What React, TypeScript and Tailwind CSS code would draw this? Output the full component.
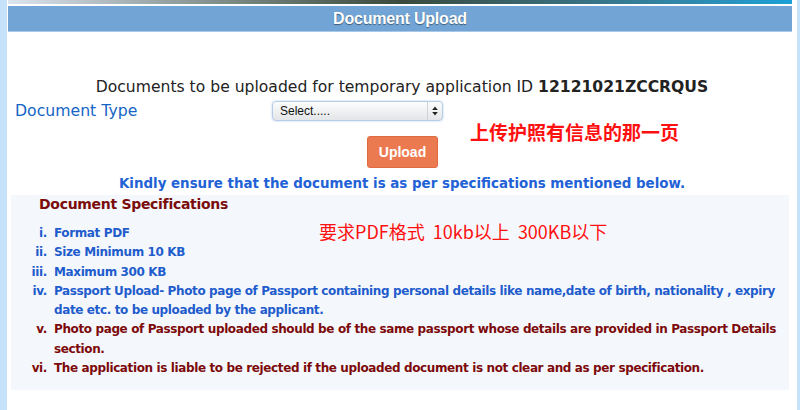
import React from 'react';

const specs: { text: React.ReactNode; tone: 'blue' | 'red' }[] = [
  { text: 'Format PDF', tone: 'blue' },
  { text: 'Size Minimum 10 KB', tone: 'blue' },
  { text: 'Maximum 300 KB', tone: 'blue' },
  {
    text: (
      <>
        Passport Upload- Photo page of Passport containing personal details like name,date of birth, nationality , expiry
        <br />
        date etc. to be uploaded by the applicant.
      </>
    ),
    tone: 'blue',
  },
  {
    text: (
      <>
        Photo page of Passport uploaded should be of the same passport whose details are provided in Passport Details
        <br />
        section.
      </>
    ),
    tone: 'red',
  },
  { text: 'The application is liable to be rejected if the uploaded document is not clear and as per specification.', tone: 'red' },
];

const numerals = ['i.', 'ii.', 'iii.', 'iv.', 'v.', 'vi.'];

const verdana = { fontFamily: '"DejaVu Sans", Verdana, sans-serif' };

export default function App() {
  return (
    <div className="flex h-[410px] w-[800px] overflow-hidden bg-[#c6e2fb]">
      <div className="relative ml-[7px] h-full w-[790px] bg-white">
        {/* top banner strip */}
        <div className="ml-[1px] mr-[5px] h-[4px] bg-gradient-to-r from-[#dde5f0] via-[#3a4a3c] to-[#1aa0d8]"></div>

        {/* header bar */}
        <div className="ml-[1px] mr-[5px] mt-[2px] flex h-[26px] items-center justify-center border-b border-[#a9c8e8] bg-[#72a5d6]">
          <span
            className="text-[16px] font-bold text-white [text-shadow:0_1px_1px_rgba(0,0,0,0.45)]"
            style={{ fontFamily: '"Liberation Sans Narrow", "Liberation Sans", Arial, sans-serif', letterSpacing: '-0.2px' }}
          >
            Document Upload
          </span>
        </div>

        <div style={verdana}>
          <p className="mt-[45px] text-center text-[15.6px] leading-[20px] text-[#222]">
            Documents to be uploaded for temporary application ID <b>12121021ZCCRQUS</b>
          </p>

          <div className="mt-[4px] flex h-[20px] items-center">
            <span className="w-[265px] pl-[8px] text-[15.7px] text-[#1565c6]">Document Type</span>
            <div
              className="flex h-[20px] w-[171px] items-center justify-between rounded-[4px] border border-[#b7cde6] bg-gradient-to-b from-[#fdfdfd] to-[#e3e5e8] pl-[7px] shadow-[0_0_2px_rgba(90,150,220,0.5)]"
              style={{ fontFamily: '"Liberation Sans", Arial, sans-serif' }}
            >
              <span className="text-[12px] text-[#111]">Select.....</span>
              <span className="flex h-full w-[15px] items-center justify-center border-l border-[#cfd3d8]">
                <svg width="6" height="10" viewBox="0 0 6 10">
                  <path d="M3 0.5 L5.8 4 H0.2 Z" fill="#222" />
                  <path d="M3 9.5 L5.8 6 H0.2 Z" fill="#222" />
                </svg>
              </span>
            </div>
          </div>

          <div className="mt-[15px] flex justify-center">
            <button
              className="ml-[1px] h-[32px] w-[71px] rounded-[3px] border border-[#e06a42] bg-[#ec7a51] text-[14px] font-bold text-white"
              style={{ fontFamily: '"Liberation Sans", Arial, sans-serif' }}
            >
              Upload
            </button>
          </div>

          <p className="mt-[8px] text-center text-[13.4px] font-bold leading-[16px] text-[#2262d6]">
            Kindly ensure that the document is as per specifications mentioned below.
          </p>

          <div className="ml-[4px] mr-[8px] mt-[3px] h-[195px] bg-[#f4f8fd]">
            <h3 className="pl-[28px] text-[14px] font-bold leading-[18px] tracking-[-0.3px] text-[#7b0c0c]">
              Document Specifications
            </h3>
            <ol className="mt-[11px] text-[12px] font-bold leading-[19.3px] tracking-[-0.38px]">
              {specs.map((s, i) => (
                <li key={i} className={`flex ${s.tone === 'blue' ? 'text-[#1f5ccc]' : 'text-[#7d0a0a]'}`}>
                  <span className="w-[36px] shrink-0 text-right">{numerals[i]}</span>
                  <span className="ml-[7px] whitespace-nowrap">{s.text}</span>
                </li>
              ))}
            </ol>
          </div>
        </div>

        {/* red annotations */}
        <span
          className="absolute left-[463px] top-[122px] text-[19px] font-bold leading-[19px] text-[#ff1010]"
          style={{ fontFamily: '"Noto Sans CJK SC", sans-serif' }}
        >
          上传护照有信息的那一页
        </span>
        <span
          className="absolute left-[312px] top-[222px] whitespace-pre text-[18px] leading-[18px] text-[#ff1010]"
          style={{ fontFamily: '"Noto Sans CJK SC", sans-serif' }}
        >
          要求PDF格式  10kb以上  300KB以下
        </span>
      </div>
    </div>
  );
}
